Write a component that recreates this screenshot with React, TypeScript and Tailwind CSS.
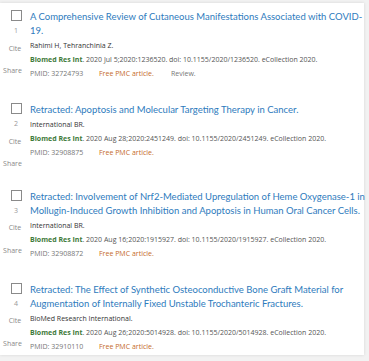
import React from 'react';

type Item = {
  n: number;
  title: string;
  authors: string;
  citation: string;
  pmid: string;
  review?: boolean;
};

const ITEMS: Item[] = [
  {
    n: 1,
    title: 'A Comprehensive Review of Cutaneous Manifestations Associated with COVID-19.',
    authors: 'Rahimi H, Tehranchinia Z.',
    citation: ' 2020 Jul 5;2020:1236520. doi: 10.1155/2020/1236520. eCollection 2020.',
    pmid: '32724793',
    review: true,
  },
  {
    n: 2,
    title: 'Retracted: Apoptosis and Molecular Targeting Therapy in Cancer.',
    authors: 'International BR.',
    citation: ' 2020 Aug 28;2020:2451249. doi: 10.1155/2020/2451249. eCollection 2020.',
    pmid: '32908875',
  },
  {
    n: 3,
    title:
      'Retracted: Involvement of Nrf2-Mediated Upregulation of Heme Oxygenase-1 in Mollugin-Induced Growth Inhibition and Apoptosis in Human Oral Cancer Cells.',
    authors: 'International BR.',
    citation: ' 2020 Aug 16;2020:1915927. doi: 10.1155/2020/1915927. eCollection 2020.',
    pmid: '32908872',
  },
  {
    n: 4,
    title:
      'Retracted: The Effect of Synthetic Osteoconductive Bone Graft Material for Augmentation of Internally Fixed Unstable Trochanteric Fractures.',
    authors: 'BioMed Research International.',
    citation: ' 2020 Aug 26;2020:5014928. doi: 10.1155/2020/5014928. eCollection 2020.',
    pmid: '32910110',
  },
];

function Row({ it }: { it: Item }) {
  return (
    <div className="flex">
      <div className="flex w-[30px] shrink-0 flex-col items-center text-[7px] leading-[7.5px] text-[#888]">
        <div className="ml-[2px] h-[11px] w-[11px] border border-[#8a8a8a] bg-white" />
        <div className="mt-[6px] ml-[2px] text-[#999]">{it.n}</div>
        <div className="mt-[10px]">Cite</div>
        <div className="mt-[15px] mr-[5px]">Share</div>
      </div>
      <div className="w-[337px] shrink-0">
        <div className="font-['Lato',sans-serif] text-[9.5px] leading-[14px] text-[#2e7bbd]">{it.title}</div>
        <div className="mt-[1px] text-[7px] leading-[14px] text-[#333]">{it.authors}</div>
        <div className="whitespace-nowrap text-[7px] leading-[14px] text-[#555]">
          <span className="font-bold text-[#3f7a3a]">Biomed Res Int</span>.{it.citation}
        </div>
        <div className="flex whitespace-nowrap text-[7px] leading-[14px]">
          <div className="w-[69px] shrink-0 text-[#777]">PMID: {it.pmid}</div>
          <div className="w-[72px] shrink-0 text-[#c56a2a]">Free PMC article.</div>
          {it.review && <div className="text-[#777]">Review.</div>}
        </div>
      </div>
    </div>
  );
}

export default function App() {
  return (
    <div className="h-[361px] w-[369px] overflow-hidden bg-[#f2f2f2] pt-[3px] font-['Open_Sans','Noto_Sans',sans-serif]">
      <div className="flex h-[352px] w-[364px] flex-col gap-[22px] bg-white pt-[7px] shadow-[0_0_3px_rgba(0,0,0,0.12)]">
        {ITEMS.map((it) => (
          <Row key={it.n} it={it} />
        ))}
      </div>
    </div>
  );
}
